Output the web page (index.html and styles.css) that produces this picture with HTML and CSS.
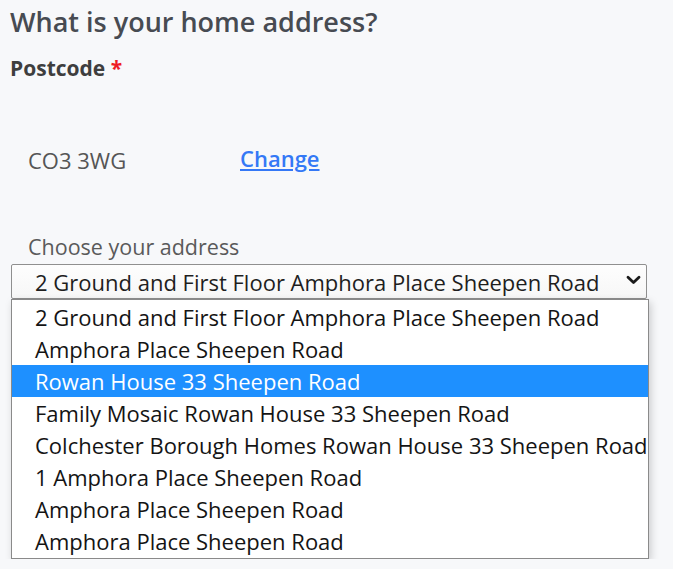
FILE: index.html
```html
<!DOCTYPE html>
<html lang="en">
<head>
<meta charset="utf-8">
<title>Home address</title>
<link rel="stylesheet" href="styles.css">
</head>
<body>
<main class="page">
  <h1 class="title">What is your home address?</h1>
  <div class="field-label">Postcode <span class="req">*</span></div>
  <div class="postcode-row">
    <span class="postcode">CO3 3WG</span>
    <a class="change" href="#">Change</a>
  </div>
  <div class="choose-label">Choose your address</div>
  <div class="select-wrap">
    <div class="select">
      <span class="select-value">2 Ground and First Floor Amphora Place Sheepen Road</span>
      <svg class="chev" width="15" height="10" viewBox="0 0 15 10"><path d="M2 2.2 L7.5 7.5 L13 2.2" fill="none" stroke="#1a1a1a" stroke-width="2.8" stroke-linecap="round" stroke-linejoin="round"/></svg>
    </div>
    <ul class="listbox">
      <li class="opt">2 Ground and First Floor Amphora Place Sheepen Road</li>
      <li class="opt">Amphora Place Sheepen Road</li>
      <li class="opt sel">Rowan House 33 Sheepen Road</li>
      <li class="opt">Family Mosaic Rowan House 33 Sheepen Road</li>
      <li class="opt">Colchester Borough Homes Rowan House 33 Sheepen Road</li>
      <li class="opt">1 Amphora Place Sheepen Road</li>
      <li class="opt">Amphora Place Sheepen Road</li>
      <li class="opt">Amphora Place Sheepen Road</li>
    </ul>
  </div>
</main>
</body>
</html>
```
FILE: styles.css
```css
html, body {
  margin: 0;
  padding: 0;
  background: #f7f8fa;
}
body {
  font-family: "Open Sans", "Noto Sans", sans-serif;
  color: #4a4a4a;
}
.page {
  padding: 4px 0 0 10px;
  width: 663px;
}
.title {
  margin: 0;
  font-size: 27px;
  font-weight: 600;
  line-height: 36px;
  color: #474b52;
}
.field-label {
  margin-top: 14px;
  font-size: 21px;
  font-weight: 700;
  line-height: 28px;
  color: #3e3e3e;
}
.req { color: #ee1c25; }
.postcode-row {
  display: flex;
  align-items: center;
  margin-top: 61px;
  padding-left: 18px;
  height: 34px;
}
.postcode {
  font-size: 22px;
  color: #555;
  width: 212px;
}
.change {
  font-size: 22px;
  font-weight: 600;
  color: #3478f6;
  text-decoration: underline;
  margin-top: -4px;
}
.choose-label {
  margin-top: 56px;
  padding-left: 18px;
  font-size: 21.5px;
  color: #5a5a5a;
  line-height: 28px;
}
.select-wrap {
  margin-top: 3px;
  margin-left: 1px;
}
.select {
  box-sizing: border-box;
  width: 636px;
  height: 35px;
  border: 1px solid #8f8f8f;
  border-radius: 2px;
  background: linear-gradient(#fdfdfd, #f7f7f7);
  display: flex;
  align-items: center;
  justify-content: space-between;
  padding: 0 5px 0 23px;
}
.select-value {
  font-size: 22px;
  color: #1e1e1e;
  white-space: nowrap;
}
.chev { flex: none; margin-top: -3px; }
.listbox {
  box-sizing: border-box;
  width: 638px;
  margin: 0;
  padding: 1px 0;
  list-style: none;
  background: #fff;
  border: 1px solid #8a8a8a;
  box-shadow: 2px 3px 8px rgba(0,0,0,0.18);
}
.opt {
  height: 32px;
  line-height: 32px;
  padding-left: 23px;
  font-size: 22px;
  color: #141414;
  white-space: nowrap;
}
.opt.sel {
  background: #1e90ff;
  color: #fff;
}
```
